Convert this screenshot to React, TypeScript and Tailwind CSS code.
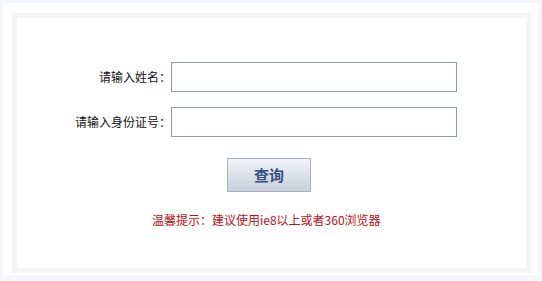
import { useState } from 'react'

const font = { fontFamily: '"Noto Sans CJK SC", "Noto Sans", sans-serif' }

const Field = ({ label, value, onChange }: { label: string; value: string; onChange: (v: string) => void }) => (
  <div className="flex items-center">
    <label className="w-[154px] text-right text-[12px] leading-[30px] text-[#111]">{label}</label>
    <input
      value={value}
      onChange={(e) => onChange(e.target.value)}
      className="w-[286px] h-[30px] border border-[#8e9ba4] bg-white px-1 text-[12px] outline-none"
    />
  </div>
)

export default function App() {
  const [name, setName] = useState('')
  const [idNo, setIdNo] = useState('')

  return (
    <div className="w-[542px] h-[281px] bg-[#f3f7fc] pt-[3px] pl-[3px] pr-[4px] pb-[6px]" style={font}>
      <div className="h-full bg-white pt-[10px] pl-[9px] pr-[7px] pb-[2px]">
        <div className="h-full border-[5px] border-[#f4f4f4] bg-white pt-[44px]">
          <div className="flex flex-col gap-[15px]">
            <Field label="请输入姓名：" value={name} onChange={setName} />
            <Field label="请输入身份证号：" value={idNo} onChange={setIdNo} />
          </div>
          <button className="mt-[21px] ml-[210px] w-[84px] h-[34px] border border-[#a9b0bb] bg-gradient-to-b from-[#f1f3f7] to-[#c8cfdb] text-[15px] font-bold text-[#36507f]">
            查询
          </button>
          <p className="mt-[21px] ml-[135px] text-[12px] leading-[14px] text-[#bf0d16]">
            温馨提示：建议使用ie8以上或者360浏览器
          </p>
        </div>
      </div>
    </div>
  )
}
